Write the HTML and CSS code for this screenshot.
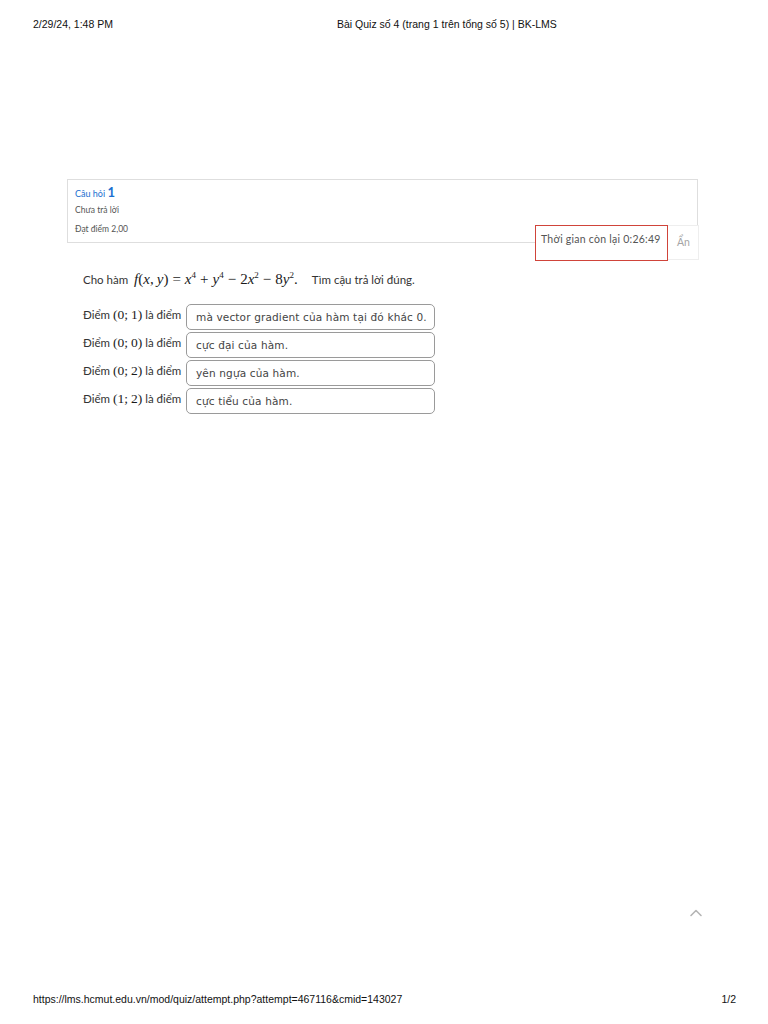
FILE: index.html
```html
<!DOCTYPE html>
<html lang="vi">
<head>
<meta charset="utf-8">
<title>Bài Quiz số 4</title>
<link rel="stylesheet" href="styles.css">
</head>
<body>
<div class="page">
  <header class="print-head">
    <span class="date">2/29/24, 1:48 PM</span>
    <span class="title">Bài Quiz số 4 (trang 1 trên tổng số 5) | BK-LMS</span>
  </header>

  <main class="content">
    <div class="info-wrap">
      <div class="info">
        <div class="qno">Câu hỏi <span class="num">1</span></div>
        <div class="state">Chưa trả lời</div>
        <div class="grade">Đạt điểm 2,00</div>
      </div>
      <div class="timer">
        <div class="timer-box">Thời gian còn lại 0:26:49</div>
        <div class="hide-btn">Ẩn</div>
      </div>
    </div>

    <div class="qtext">
      Cho hàm <span class="m"><i>f</i>(<i>x</i>,<span class="sp"></span><i>y</i>)<span class="op">=</span><i>x</i><sup>4</sup><span class="op">+</span><i>y</i><sup>4</sup><span class="op">−</span>2<i>x</i><sup>2</sup><span class="op">−</span>8<i>y</i><sup>2</sup>.</span><span class="gap"></span>Tìm cậu trả lời đúng.
    </div>

    <div class="answers">
      <div class="row"><span class="lbl">Điểm <span class="m sm">(0;<span class="sp"></span>1)</span> là điểm</span><span class="sel">mà vector gradient của hàm tại đó khác 0.</span></div>
      <div class="row"><span class="lbl">Điểm <span class="m sm">(0;<span class="sp"></span>0)</span> là điểm</span><span class="sel">cực đại của hàm.</span></div>
      <div class="row"><span class="lbl">Điểm <span class="m sm">(0;<span class="sp"></span>2)</span> là điểm</span><span class="sel">yên ngựa của hàm.</span></div>
      <div class="row"><span class="lbl">Điểm <span class="m sm">(1;<span class="sp"></span>2)</span> là điểm</span><span class="sel">cực tiểu của hàm.</span></div>
    </div>
  </main>

  <div class="totop">
    <svg width="14" height="9" viewBox="0 0 14 9"><path d="M2 7.5 L7 2.5 L12 7.5" fill="none" stroke="#b5b5b5" stroke-width="1.6" stroke-linecap="round" stroke-linejoin="round"/></svg>
  </div>

  <footer class="print-foot">
    <span>https://lms.hcmut.edu.vn/mod/quiz/attempt.php?attempt=467116&amp;cmid=143027</span>
    <span>1/2</span>
  </footer>
</div>
</body>
</html>
```

FILE: styles.css
```css
html, body {
  margin: 0;
  padding: 0;
  background: #fff;
}
.page {
  width: 768px;
  height: 1024px;
  position: relative;
  display: flex;
  flex-direction: column;
  font-family: "Lato", "Noto Sans", sans-serif;
  color: #333;
}
.print-head {
  display: flex;
  padding: 18px 0 0 33px;
  font-family: "Liberation Sans", Arial, sans-serif;
  font-size: 10.5px;
  color: #111;
  line-height: 12px;
}
.print-head .date {
  width: 304px;
}
.content {
  padding: 149px 70px 0 67px;
  flex: 1;
}
.info-wrap {
  position: relative;
}
.info {
  border: 1px solid #dedede;
  height: 56px;
  padding: 6px 7px 0;
  width: 615px;
}
.qno {
  color: #1a6fd0;
  font-size: 9px;
  line-height: 13px;
}
.qno .num {
  font-size: 13px;
  font-weight: bold;
}
.state {
  font-size: 8.5px;
  color: #555;
  margin-top: 5px;
  line-height: 11px;
}
.grade {
  font-size: 8.5px;
  color: #555;
  margin-top: 8px;
  line-height: 11px;
}
.timer {
  position: absolute;
  left: 468px;
  top: 46px;
  display: flex;
}
.timer-box {
  border: 1px solid #d0443a;
  background: #fff;
  font-size: 10.5px;
  letter-spacing: 0.25px;
  color: #555;
  padding: 7px 0 0 5px;
  box-sizing: border-box;
  width: 133px;
  height: 36px;
  line-height: 12px;
}
.hide-btn {
  width: 31px;
  height: 35px;
  border: 1px solid #eee;
  border-left: none;
  box-sizing: border-box;
  font-size: 10.5px;
  color: #a5a5a5;
  padding: 10px 0 0 9px;
  background: #fff;
}
.qtext {
  margin: 28px 0 0 16px;
  font-size: 11.5px;
  color: #333;
  line-height: 16px;
}
.m {
  font-family: "Liberation Serif", "Times New Roman", serif;
  font-size: 15px;
  color: #1a1a1a;
}
.qtext .m {
  margin-left: 3px;
}
.m.sm {
  font-size: 13.5px;
}
.m sup {
  font-size: 9px;
  vertical-align: 6px;
  line-height: 0;
}
.op {
  margin: 0 4px;
}
.sp {
  display: inline-block;
  width: 3px;
}
.gap {
  display: inline-block;
  width: 14px;
}
.answers {
  margin: 16px 0 0 16px;
  display: flex;
  flex-direction: column;
  gap: 2px;
}
.row {
  display: flex;
  align-items: flex-start;
}
.lbl {
  font-size: 11.5px;
  color: #333;
  width: 103px;
  padding-top: 3px;
  line-height: 16px;
  white-space: nowrap;
}
.sel {
  width: 249px;
  height: 26px;
  border: 1px solid #9a9a9a;
  border-radius: 5px;
  box-sizing: border-box;
  font-family: "DejaVu Sans", sans-serif;
  font-size: 10.5px;
  letter-spacing: 0.15px;
  color: #444;
  padding: 6px 0 0 9px;
  line-height: 12px;
  white-space: nowrap;
}
.totop {
  position: absolute;
  left: 689px;
  top: 901px;
}
.print-foot {
  display: flex;
  justify-content: space-between;
  padding: 0 32px 19px 33px;
  font-family: "Liberation Sans", Arial, sans-serif;
  font-size: 10.5px;
  color: #111;
  line-height: 12px;
}
```
